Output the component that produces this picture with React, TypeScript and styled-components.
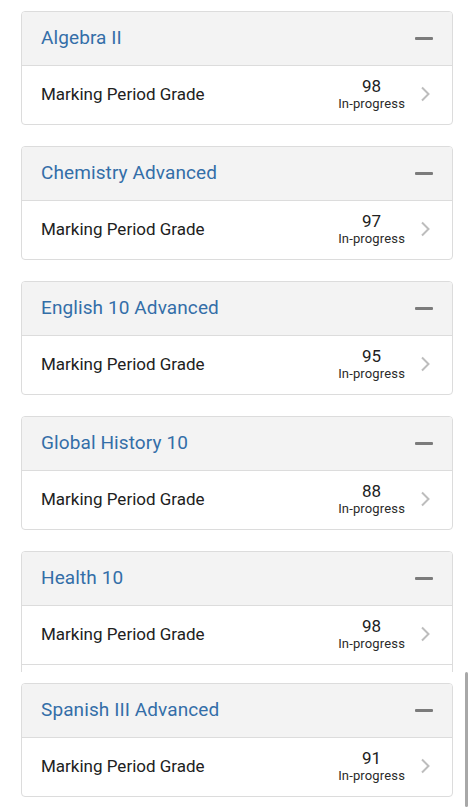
import React from 'react';
import styled, { createGlobalStyle } from 'styled-components';

const GlobalStyle = createGlobalStyle`
  html, body {
    margin: 0;
    padding: 0;
    background: #ffffff;
    font-family: Roboto, "Noto Sans", "Liberation Sans", sans-serif;
  }
  * { box-sizing: border-box; }
`;

type Course = { name: string; grade: number; extraRow?: boolean };

const topCourses: Course[] = [
    { name: 'Algebra II', grade: 98 },
    { name: 'Chemistry Advanced', grade: 97 },
    { name: 'English 10 Advanced', grade: 95 },
    { name: 'Global History 10', grade: 88 },
    { name: 'Health 10', grade: 98, extraRow: true },
];

const Page = styled.div`
    width: 474px;
    height: 807px;
    display: flex;
    flex-direction: column;
    overflow: hidden;
`;

const ListPane = styled.div`
    height: 672px;
    overflow: hidden;
    padding: 11px 21px 0;
    display: flex;
    flex-direction: column;
    gap: 21px;
`;

const BottomPane = styled.div`
    position: relative;
    flex: 1;
    padding: 11px 21px 0;
`;

const ScrollThumb = styled.div`
    position: absolute;
    right: 6px;
    top: 0;
    bottom: 0;
    width: 3px;
    background: #a8a8a8;
    border-radius: 2px;
`;

const Card = styled.div`
    border: 1px solid #dcdcdc;
    border-radius: 4px;
    background: #fff;
    flex-shrink: 0;
    overflow: hidden;
`;

const Header = styled.div`
    height: 54px;
    background: #f3f3f3;
    display: flex;
    align-items: center;
    justify-content: space-between;
    padding: 0 19px 2px 19px;
    border-bottom: 1px solid #dcdcdc;
`;

const Title = styled.span`
    color: #336ea8;
    font-size: 19px;
    letter-spacing: 0.1px;
`;

const Minus = styled.span`
    width: 18px;
    height: 3px;
    margin-top: 2px;
    background: #7b7b7b;
    border-radius: 1px;
`;

const Row = styled.div<{ $divider?: boolean }>`
    height: 58px;
    display: flex;
    align-items: center;
    padding: 0 21px 2px 19px;
    border-top: ${({ $divider }) => ($divider ? '1px solid #dcdcdc' : 'none')};
`;

const Label = styled.span`
    flex: 1;
    color: #212121;
    font-size: 17px;
`;

const GradeBlock = styled.div`
    display: flex;
    flex-direction: column;
    align-items: center;
    margin-right: 14px;
`;

const Grade = styled.span`
    color: #212121;
    font-size: 17px;
    line-height: 18px;
`;

const Status = styled.span`
    color: #2a2a2a;
    font-size: 13px;
    letter-spacing: 0.15px;
    line-height: 17px;
`;

const Chevron = () => (
    <svg width="12" height="16" viewBox="0 0 12 16" fill="none">
        <path d="M3 1.5 L9.5 8 L3 14.5" stroke="#bdbdbd" strokeWidth="2" />
    </svg>
);

const GradeRow = ({ grade }: { grade: number }) => (
    <Row>
        <Label>Marking Period Grade</Label>
        <GradeBlock>
            <Grade>{grade}</Grade>
            <Status>In-progress</Status>
        </GradeBlock>
        <Chevron />
    </Row>
);

const CourseCard = ({ course }: { course: Course }) => (
    <Card>
        <Header>
            <Title>{course.name}</Title>
            <Minus />
        </Header>
        <GradeRow grade={course.grade} />
        {/* next row of this card is scrolled out of view below the fold */}
        {course.extraRow && <Row $divider />}
    </Card>
);

export default function App() {
    return (
        <>
            <GlobalStyle />
            <Page>
                <ListPane>
                    {topCourses.map((c) => (
                        <CourseCard key={c.name} course={c} />
                    ))}
                </ListPane>
                <BottomPane>
                    <CourseCard course={{ name: 'Spanish III Advanced', grade: 91 }} />
                    <ScrollThumb />
                </BottomPane>
            </Page>
        </>
    );
}
